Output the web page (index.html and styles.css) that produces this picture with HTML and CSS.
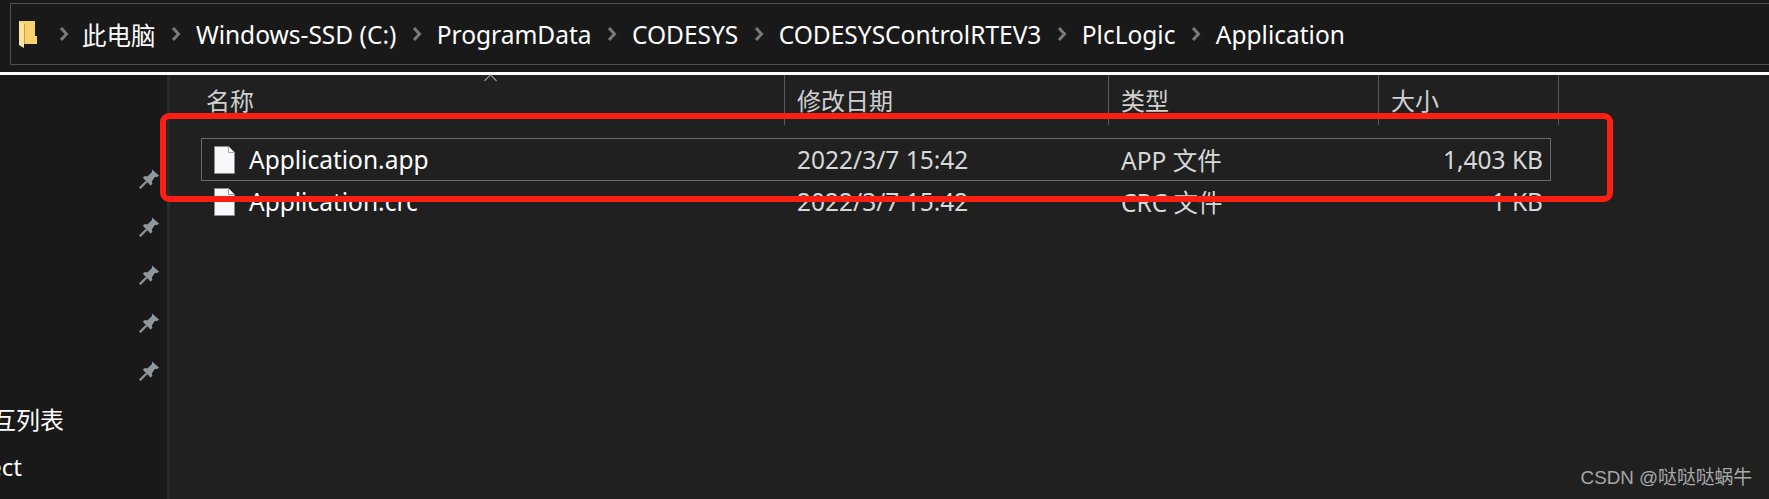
FILE: index.html
```html
<!DOCTYPE html>
<html lang="zh-CN">
<head>
<meta charset="UTF-8" />
<title>Application</title>
<link rel="stylesheet" href="styles.css">
</head>
<body>

<svg width="0" height="0" class="defs">
  <symbol id="chev" viewBox="0 0 10 14"><path d="M2 1l5.500 6-5.500 6" fill="none" stroke="currentColor" stroke-width="3"/></symbol>
  <symbol id="pin" viewBox="0 0 20 20">
    <path d="M13 .5L20 6.500 18 8.200 16 7.700 12.800 12.500 13.500 15 11.500 16.500 3.800 8.800 5.800 7 8.300 7.500 13 3z" fill="currentColor"/>
    <path d="M.7 19.300L7.500 12.500" stroke="currentColor" stroke-width="2.200"/>
  </symbol>
  <symbol id="file" viewBox="0 0 21 28">
    <path d="M.5.500h14l6 6v21H.5z" fill="#f6f8fb" stroke="#8d8d8d"/>
    <path d="M14.500.500v6h6" fill="#fff" stroke="#a5a5a5"/>
  </symbol>
</svg>

<header class="topbar">
  <nav class="address">
    <svg class="folder" width="18" height="27" viewBox="0 0 18 27">
      <path d="M0 0h16v15h2v8H5v-2z" fill="#f8d26e"/>
      <path d="M0 0l5 3v24l-5-3z" fill="#fde59d"/>
      <path d="M5 3h1v20H5z" fill="#c9a24a"/>
    </svg>
    <svg class="chev first"><use href="#chev"/></svg>
    <span>此电脑</span>
    <svg class="chev"><use href="#chev"/></svg>
    <span>Windows-SSD (C:)</span>
    <svg class="chev"><use href="#chev"/></svg>
    <span>ProgramData</span>
    <svg class="chev"><use href="#chev"/></svg>
    <span>CODESYS</span>
    <svg class="chev"><use href="#chev"/></svg>
    <span>CODESYSControlRTEV3</span>
    <svg class="chev"><use href="#chev"/></svg>
    <span>PlcLogic</span>
    <svg class="chev"><use href="#chev"/></svg>
    <span>Application</span>
  </nav>
</header>

<main class="explorer">
  <aside class="sidebar">
    <div class="side-row"><svg class="pin"><use href="#pin"/></svg></div>
    <div class="side-row"><svg class="pin"><use href="#pin"/></svg></div>
    <div class="side-row"><svg class="pin"><use href="#pin"/></svg></div>
    <div class="side-row"><svg class="pin"><use href="#pin"/></svg></div>
    <div class="side-row"><svg class="pin"><use href="#pin"/></svg></div>
    <div class="side-row side-text list-label"><span>互列表</span></div>
    <div class="side-row side-text project-label"><span>Project</span></div>
  </aside>

  <section class="files">
    <div class="columns">
      <div class="col col-name">名称<span class="sort"></span></div>
      <div class="col">修改日期</div>
      <div class="col">类型</div>
      <div class="col">大小</div>
    </div>
    <div class="file-list">
      <div class="file-row selected">
        <div class="cell-name"><svg class="file"><use href="#file"/></svg>Application.app</div>
        <div>2022/3/7 15:42</div>
        <div>APP 文件</div>
        <div class="cell-size">1,403 KB</div>
      </div>
      <div class="file-row">
        <div class="cell-name"><svg class="file"><use href="#file"/></svg>Application.crc</div>
        <div>2022/3/7 15:42</div>
        <div>CRC 文件</div>
        <div class="cell-size">1 KB</div>
      </div>
    </div>
  </section>
</main>

<div class="annotation"></div>
<div class="watermark">CSDN @哒哒哒蜗牛</div>

</body>
</html>
```

FILE: styles.css
```css
html, body {
  margin: 0;
  height: 499px;
  overflow: hidden;
}
body {
  position: relative;
  background: #202020;
  color: #fff;
  font-family: "Noto Sans", "Noto Sans CJK SC", sans-serif;
  font-size: 24.5px;
}
.defs {
  position: absolute;
}
.topbar {
  box-sizing: border-box;
  height: 72px;
  padding: 3px 0 0 10px;
  background: #191919;
}
.address {
  box-sizing: border-box;
  display: flex;
  align-items: center;
  height: 62px;
  padding-left: 8px;
  border: 1px solid #4f4f4f;
  border-right: 0;
  white-space: nowrap;
}
.folder {
  flex: none;
}
.chev {
  flex: none;
  width: 10px;
  height: 14px;
  margin: 0 15.2px;
  color: #7a7a7a;
}
.chev.first {
  margin: 0 13px 0 22px;
}
.explorer {
  display: flex;
  height: 424px;
  border-top: 3px solid #fff;
}
.sidebar {
  box-sizing: border-box;
  flex: none;
  width: 170px;
  padding-top: 80px;
  background: #191919;
  border-right: 3px solid #2b2b2b;
}
.side-row {
  display: flex;
  align-items: center;
  height: 48px;
  padding-left: 139px;
}
.pin {
  width: 20px;
  height: 20px;
  color: #8f989e;
}
.side-text {
  justify-content: flex-end;
  box-sizing: border-box;
  padding-left: 0;
  padding-bottom: 2px;
  font-size: 24px;
  white-space: nowrap;
}
.list-label {
  width: 64px;
}
.project-label {
  width: 22px;
}
.files {
  flex: 1;
  min-width: 0;
}
.columns {
  display: grid;
  grid-template-columns: 615px 324px 270px 180px;
  height: 50px;
  color: #d0d0d0;
  font-size: 24px;
}
.col {
  position: relative;
  box-sizing: border-box;
  padding: 9px 0 0 12px;
  border-right: 1px solid #5a5a5a;
  line-height: 34px;
}
.col-name {
  padding-left: 36px;
}
.sort {
  position: absolute;
  top: 1px;
  left: 316px;
  width: 8px;
  height: 8px;
  border-top: 1px solid #b5b5b5;
  border-left: 1px solid #b5b5b5;
  transform: rotate(45deg);
}
.file-list {
  padding: 13px 0 0 31px;
}
.file-row {
  box-sizing: border-box;
  display: grid;
  grid-template-columns: 595px 324px 259px 170px;
  align-items: center;
  width: 1350px;
  height: 43px;
  margin-bottom: -1px;
  border: 1px solid transparent;
  color: #d8d8d8;
}
.file-row.selected {
  border-color: #6b6b6b;
}
.cell-name {
  display: flex;
  align-items: center;
  padding-left: 12px;
  color: #fff;
}
.file {
  flex: none;
  width: 21px;
  height: 28px;
  margin-right: 14px;
}
.cell-size {
  padding-right: 7px;
  text-align: right;
}
.annotation {
  position: absolute;
  box-sizing: border-box;
  left: 160px;
  top: 113px;
  width: 1453px;
  height: 89px;
  border: 6px solid #fe1f13;
  border-radius: 9px;
}
.watermark {
  position: absolute;
  right: 17px;
  top: 468px;
  color: #a8a8a8;
  font-family: "Liberation Sans", "Noto Sans CJK SC", sans-serif;
  font-size: 18.8px;
  line-height: 20px;
}
```
